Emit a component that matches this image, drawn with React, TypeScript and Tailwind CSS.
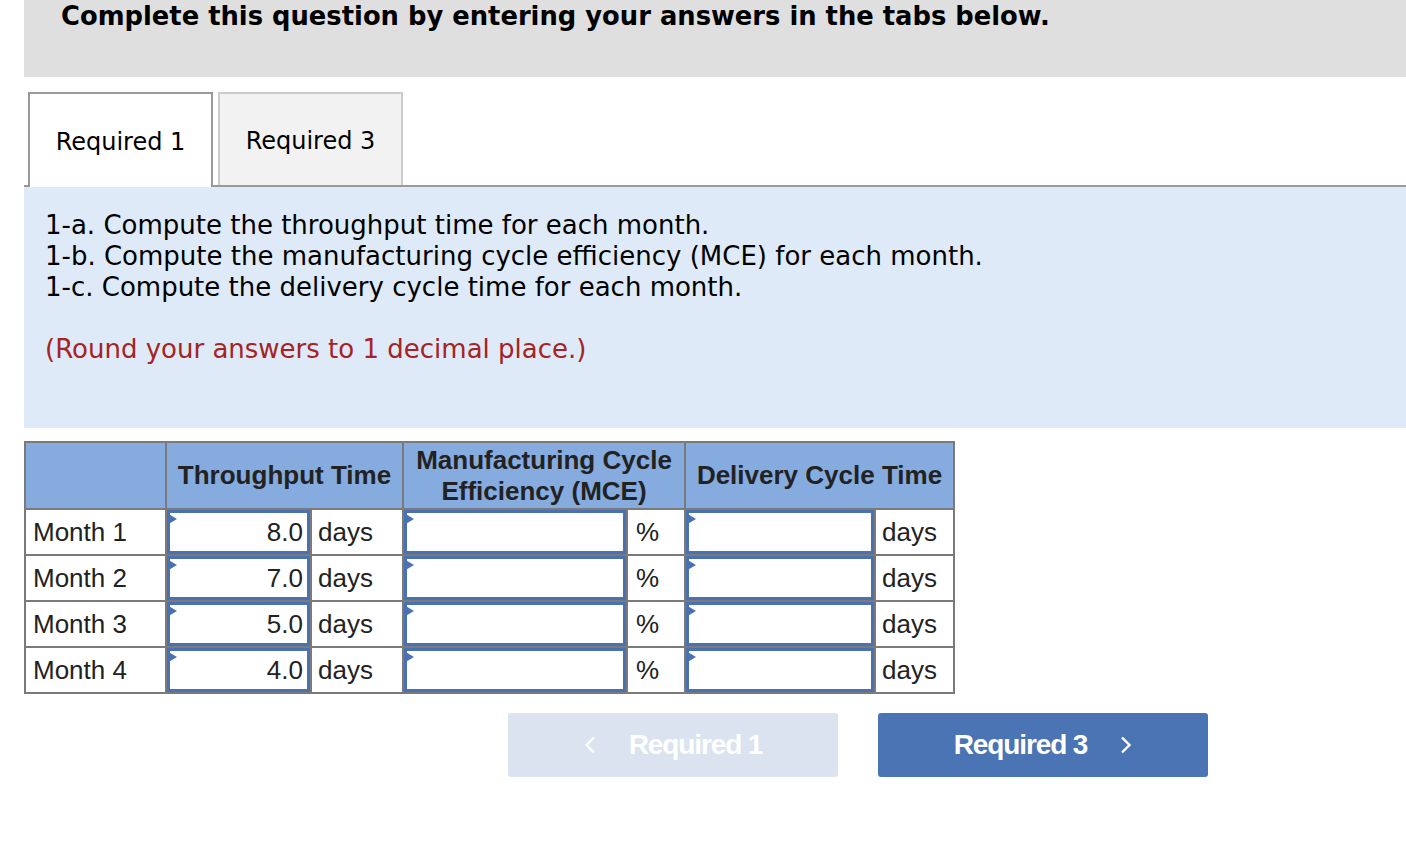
const rows = [
  { label: "Month 1", value: "8.0" },
  { label: "Month 2", value: "7.0" },
  { label: "Month 3", value: "5.0" },
  { label: "Month 4", value: "4.0" },
];

const AnswerBox = ({ value }: { value?: string }) => (
  <div className="relative h-[44px] border-[3px] border-[#4a72b3] bg-white px-[4px] text-right leading-[38px]">
    <span className="absolute left-[-3px] top-0 h-0 w-0 border-y-[6px] border-l-[10px] border-y-transparent border-l-[#4a72b3]" />
    {value}
  </div>
);

const Chevron = ({ dir }: { dir: "left" | "right" }) => (
  <svg width="12" height="18" viewBox="0 0 12 18" fill="none" stroke="currentColor" strokeWidth="2.4">
    {dir === "left" ? <polyline points="10,1.5 2.5,9 10,16.5" /> : <polyline points="2,1.5 9.5,9 2,16.5" />}
  </svg>
);

export default function App() {
  return (
    <div className="min-h-[844px] bg-white pl-[24px] text-black [font-family:'DejaVu_Sans',Verdana,sans-serif]">
      <div className="h-[77px] bg-[#dfdfdf] pl-[37px] pt-[1px]">
        <h1 className="text-[25.8px] font-bold leading-[30px]">
          Complete this question by entering your answers in the tabs below.
        </h1>
      </div>

      <div className="mt-[15px] flex items-end border-b-2 border-[#9a9a9a] pl-[4px]">
        <div className="mb-[-2px] flex h-[95px] w-[185px] items-center justify-center border-2 border-b-0 border-[#9a9a9a] bg-white pt-[2px] text-[24px]">
          Required 1
        </div>
        <div className="ml-[5px] flex h-[93px] w-[185px] items-center justify-center border-2 border-b-0 border-[#cccccc] bg-[#f2f2f2] pt-[2px] text-[24px]">
          Required 3
        </div>
      </div>

      <div className="h-[241px] bg-[#deeaf7] px-[21px] pt-[23px] text-[26px] leading-[31px]">
        <p>1-a. Compute the throughput time for each month.</p>
        <p>1-b. Compute the manufacturing cycle efficiency (MCE) for each month.</p>
        <p>1-c. Compute the delivery cycle time for each month.</p>
        <p className="mt-[31px] text-[#a52323]">(Round your answers to 1 decimal place.)</p>
      </div>

      <table className="mt-[13px] table-fixed border-collapse text-[26px] text-[#222] [font-family:'Liberation_Sans',Arial,sans-serif]">
        <colgroup>
          <col className="w-[141px]" />
          <col className="w-[145px]" />
          <col className="w-[92px]" />
          <col className="w-[224px]" />
          <col className="w-[58px]" />
          <col className="w-[190px]" />
          <col className="w-[79px]" />
        </colgroup>
        <thead>
          <tr className="h-[67px] bg-[#85abdf] font-bold leading-[31px]">
            <th className="border-2 border-[#7a7a7a]" />
            <th colSpan={2} className="border-2 border-[#7a7a7a]">
              Throughput Time
            </th>
            <th colSpan={2} className="border-2 border-[#7a7a7a]">
              Manufacturing Cycle
              <br />
              Efficiency (MCE)
            </th>
            <th colSpan={2} className="border-2 border-[#7a7a7a]">
              Delivery Cycle Time
            </th>
          </tr>
        </thead>
        <tbody>
          {rows.map((r) => (
            <tr key={r.label} className="h-[46px]">
              <td className="border-2 border-[#7a7a7a] pl-[7px]">{r.label}</td>
              <td className="border-2 border-[#7a7a7a] p-0">
                <AnswerBox value={r.value} />
              </td>
              <td className="border-2 border-[#7a7a7a] pl-[6px]">days</td>
              <td className="border-2 border-[#7a7a7a] p-0">
                <AnswerBox />
              </td>
              <td className="border-2 border-[#7a7a7a] pl-[8px]">%</td>
              <td className="border-2 border-[#7a7a7a] p-0">
                <AnswerBox />
              </td>
              <td className="border-2 border-[#7a7a7a] pl-[6px]">days</td>
            </tr>
          ))}
        </tbody>
      </table>

      <div className="mt-[19px] flex gap-[40px] pl-[484px] text-[28px] font-bold tracking-[-1.1px] text-white [font-family:'Liberation_Sans',Arial,sans-serif]">
        <button className="flex h-[64px] w-[330px] items-center justify-center gap-[33px] rounded-[3px] bg-[#dae3ef]">
          <Chevron dir="left" />
          <span>Required 1</span>
        </button>
        <button className="flex h-[64px] w-[330px] items-center justify-center gap-[33px] rounded-[3px] bg-[#4a74b3]">
          <span>Required 3</span>
          <Chevron dir="right" />
        </button>
      </div>
    </div>
  );
}
